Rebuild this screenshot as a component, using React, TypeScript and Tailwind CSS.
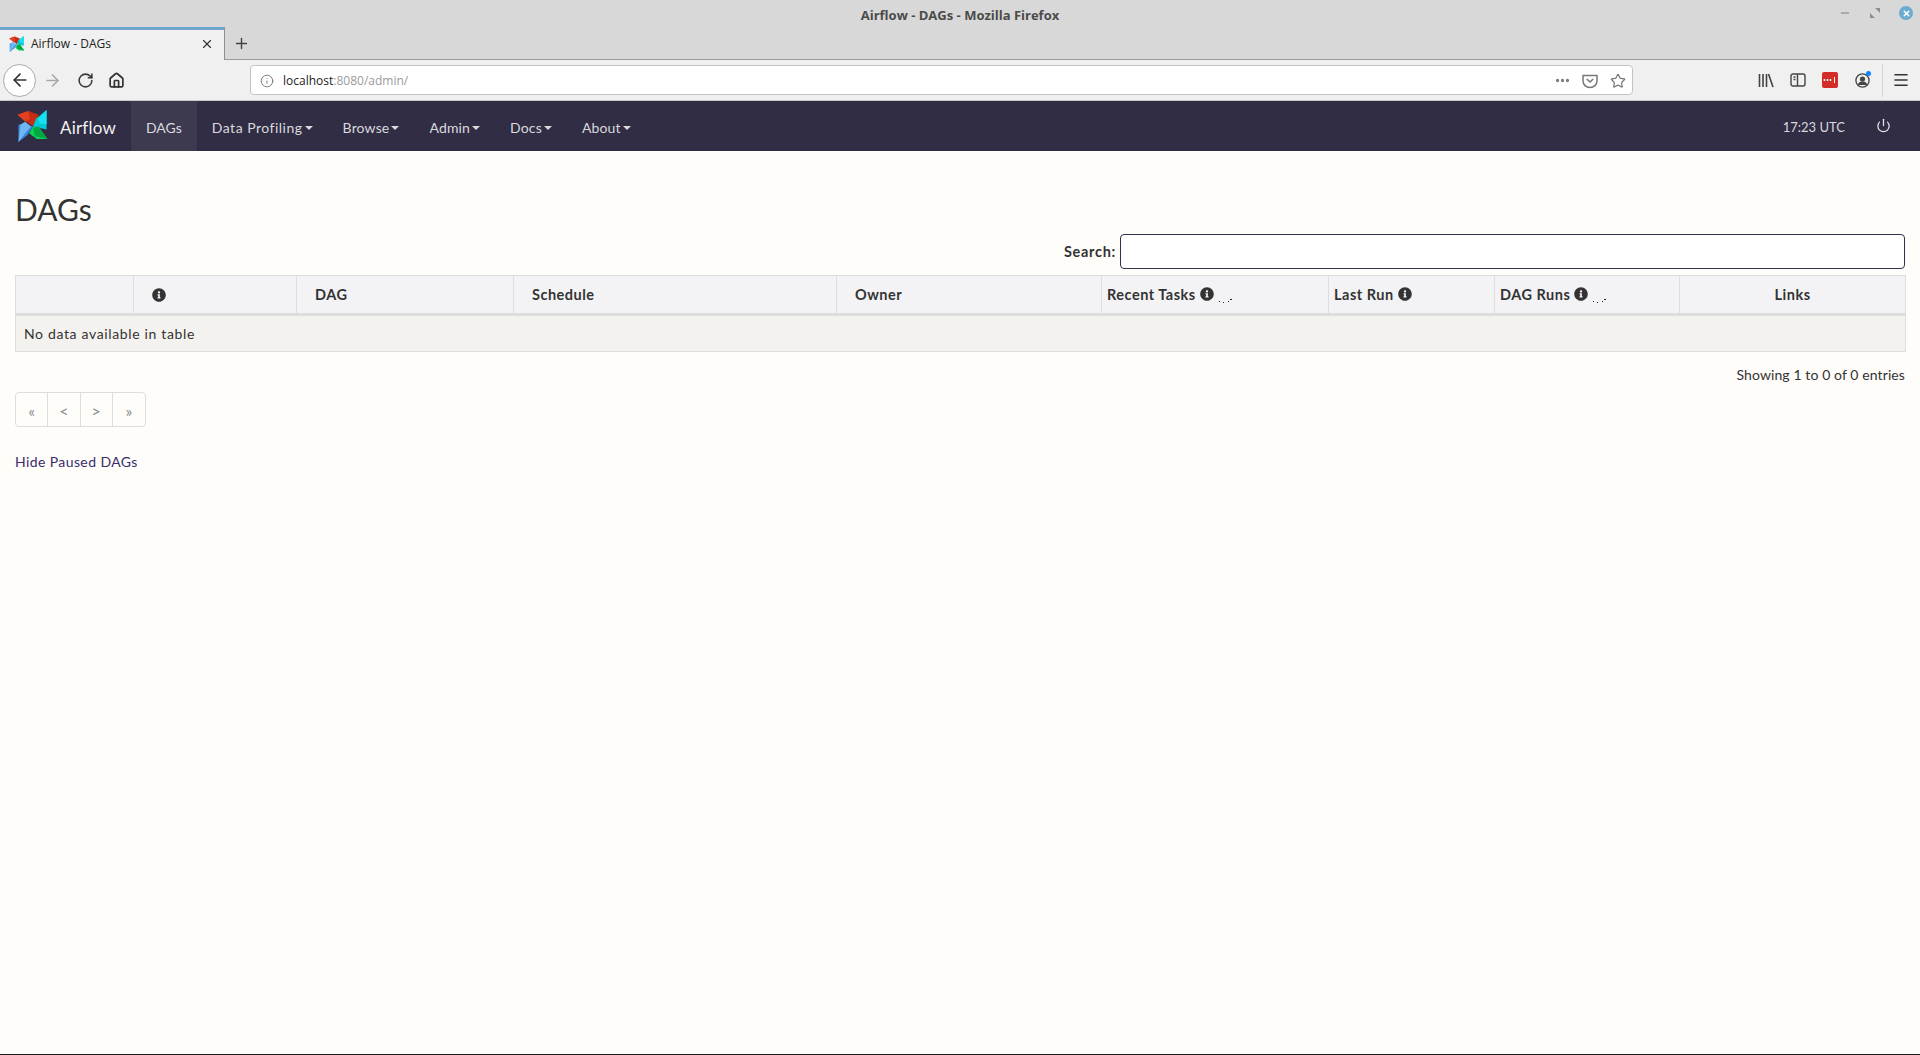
import React from "react";
import { ArrowLeft, ArrowRight, RotateCw, House, Info, Ellipsis, Star, Menu, Power, X, Plus, Minus } from "lucide-react";
import { FaInfoCircle } from "react-icons/fa";

function Logo({ size }: { size: number }) {
  return (
    <svg width={size} height={size} viewBox="0 0 32 33" className="shrink-0">
      <polygon points="0,5 11,1 22,5 16,17" fill="#c92a12" />
      <polygon points="0,5 11,1 13,9 8,12" fill="#e2401f" />
      <polygon points="30,0 30,20 16,17 19,9" fill="#00c7d4" />
      <polygon points="30,0 30,15 23,14 21,9" fill="#17e3f0" />
      <polygon points="31,30 20,30 12,24 16,17 22,19" fill="#04d659" />
      <polygon points="31,30 22,17 16,19 18,27" fill="#00a843" />
      <polygon points="1,33 1,15 16,17 10,26" fill="#3f84dc" />
      <polygon points="1,33 3,15 8,12 14,17 8,24" fill="#6db7f5" />
    </svg>
  );
}

function NavItem({ label, caret = true, active = false, tracking = "tracking-[0.15px]" }: { label: string; caret?: boolean; active?: boolean; tracking?: string }) {
  return (
    <a className={`flex h-full items-center px-[15px] pt-[2px] text-[14px] text-[#d9d9de] ${tracking} ${active ? "bg-[#3d394f]" : ""}`}>
      {label}
      {caret && <span className="ml-[2px] mt-[2px] h-0 w-0 border-x-[4px] border-t-[4px] border-x-transparent border-t-[#d9d9de]" />}
    </a>
  );
}

function Th({ children, w, center }: { children?: React.ReactNode; w: string; center?: boolean }) {
  return (
    <th className={`${w} border border-b-[3px] border-[#dddddd] bg-[#f3f3f5] p-0 font-bold ${center ? "text-center" : "text-left"}`}>
      {children}
    </th>
  );
}

function InfoI() {
  return <FaInfoCircle className="inline-block size-[14px] text-[#333333]" />;
}

function Dots() {
  return (
    <svg width="16" height="6" viewBox="0 0 16 6" className="ml-[4px] inline-block">
      <rect x="1" y="3" width="1" height="1" fill="#222" />
      <rect x="5" y="4" width="1" height="1" fill="#222" />
      <rect x="10" y="3" width="1" height="1" fill="#222" />
      <rect x="12" y="1" width="2" height="1" fill="#222" />
    </svg>
  );
}

function Page({ children, border = true }: { children: React.ReactNode; border?: boolean }) {
  return (
    <a className={`flex h-[33px] w-[32.5px] items-center justify-center pt-[3px] text-[16px] text-[#8a8a8f] ${border ? "border-r border-[#dddde0]" : ""}`}>
      {children}
    </a>
  );
}

export default function App() {
  return (
    <div className="flex h-[1055px] flex-col overflow-hidden border-b border-[#1c1c1c] bg-[#fefdfa] font-['Lato',sans-serif] text-[#333333]">
      {/* window title bar */}
      <div className="relative flex h-[27px] items-center justify-center bg-[#d8d8d8] font-['Open_Sans',sans-serif] text-[13px] font-bold text-[#4b4b4b]">
        <span className="mt-[4px]">Airflow - DAGs - Mozilla Firefox</span>
        <div className="absolute right-[7px] top-[6px] flex items-center gap-[18px]">
          <Minus className="size-[12px] text-[#9a9a9a]" strokeWidth={3} />
          <svg width="12" height="12" viewBox="0 0 12 12"><polygon points="6,1 11,1 11,6" fill="#8f8f8f" /><polygon points="1,6 6,11 1,11" fill="#8f8f8f" /></svg>
          <span className="flex size-[14px] items-center justify-center rounded-full bg-[#6cacd3]">
            <X className="size-[9px] text-white" strokeWidth={4} />
          </span>
        </div>
      </div>
      {/* tab strip */}
      <div className="flex h-[33px] items-stretch border-b border-[#9b9b9b] bg-[#d8d8d8]">
        <div className="-mb-px flex w-[225px] items-center border-r border-t-[3px] border-r-[#8f8f8f] border-t-[#6ea7cb] bg-[#f0f0f0] pb-[2px] pl-[9px] pr-[10px] font-['Open_Sans',sans-serif] text-[12px] text-[#222]">
          <Logo size={16} />
          <span className="ml-[6px] flex-1">Airflow - DAGs</span>
          <X className="size-[14px] text-[#333]" strokeWidth={2} />
        </div>
        <div className="flex w-[32px] items-center justify-center">
          <Plus className="size-[17px] text-[#444]" strokeWidth={2} />
        </div>
      </div>
      {/* toolbar */}
      <div className="flex h-[41px] items-center border-b border-[#c8c8c8] bg-[#f0f0f0] pl-[3px]">
        <span className="flex size-[33px] items-center justify-center rounded-full border border-[#a8a8a8] bg-white">
          <ArrowLeft className="size-[20px] text-[#333]" strokeWidth={2} />
        </span>
        <ArrowRight className="ml-[7px] size-[19px] text-[#a9a9a9]" strokeWidth={2} />
        <RotateCw className="ml-[15px] size-[17px] text-[#3a3a3a]" strokeWidth={2.2} />
        <House className="ml-[14px] size-[17px] text-[#333]" strokeWidth={2.4} />
        <div className="ml-[125px] flex h-[30px] w-[1383px] items-center rounded-[4px] border border-[#c4c4c4] bg-white pl-[9px] pr-[6px] pt-px font-['Open_Sans',sans-serif] text-[12px]">
          <Info className="size-[14px] text-[#777]" strokeWidth={1.6} />
          <span className="ml-[9px] text-[#222]">localhost</span>
          <span className="flex-1 text-[#9a9a9a]">:8080/admin/</span>
          <Ellipsis className="size-[17px] text-[#777]" strokeWidth={2.6} />
          <svg width="16" height="16" viewBox="0 0 16 16" fill="none" className="ml-[11px]">
            <path d="M1 2.5h14v5.5a7 6.5 0 0 1-14 0z" stroke="#777" strokeWidth="1.5" strokeLinejoin="round" />
            <path d="M4.8 6l3.2 3 3.2-3" stroke="#777" strokeWidth="1.6" />
          </svg>
          <Star className="ml-[12px] size-[16px] text-[#777]" strokeWidth={1.8} />
        </div>
        <div className="ml-[125px] flex items-center">
          <svg width="16" height="16" viewBox="0 0 16 16" fill="none" stroke="#444" strokeWidth="1.6">
            <path d="M1.5 2v13M5 2v13M8.5 2v13M10.5 2l4.5 13" />
          </svg>
          <svg width="16" height="14" viewBox="0 0 16 14" fill="none" stroke="#444" strokeWidth="1.4" className="ml-[16px]">
            <rect x="1" y="1" width="14" height="12" rx="2" />
            <path d="M7.5 1v12M3.5 4h2M3.5 6.5h2" />
          </svg>
          <span className="relative ml-[16px] flex h-[16px] w-[16px] items-center justify-center rounded-[2px] bg-[#d32d27]">
            <svg width="14" height="6" viewBox="0 0 14 6"><circle cx="1.5" cy="3" r="1" fill="#fff" /><circle cx="4.5" cy="3" r="1" fill="#fff" /><circle cx="7.5" cy="3" r="1" fill="#fff" /><rect x="11" y="0" width="1" height="6" fill="#fff" /></svg>
          </span>
          <span className="relative ml-[17px] block h-[15px] w-[15px]">
            <svg width="15" height="15" viewBox="0 0 15 15" fill="none">
              <circle cx="7.5" cy="7.5" r="6.6" stroke="#444" strokeWidth="1.3" />
              <circle cx="7.5" cy="6" r="2.6" fill="#444" />
              <path d="M3 12a4.5 3.5 0 0 1 9 0z" fill="#444" />
            </svg>
            <span className="absolute -right-[1px] -top-[2px] size-[5px] rounded-full bg-[#0a84ff]" />
          </span>
          <span className="ml-[12px] h-[33px] w-px bg-[#d4d4d4]" />
          <Menu className="ml-[9px] size-[18px] text-[#333]" strokeWidth={2.2} />
        </div>
      </div>
      {/* navbar */}
      <nav className="flex h-[50px] items-center bg-[#312d45]">
        <a className="flex h-full items-center pl-[17px] pr-[15px]">
          <Logo size={32} />
          <span className="ml-[11px] pt-[3px] text-[17px] tracking-[0.2px] text-[#f2f2f2]">Airflow</span>
        </a>
        <NavItem label="DAGs" caret={false} active tracking="tracking-[0px]" />
        <NavItem label="Data Profiling" tracking="tracking-[0.5px]" />
        <NavItem label="Browse" />
        <NavItem label="Admin" />
        <NavItem label="Docs" />
        <NavItem label="About" />
        <span className="ml-auto pt-[3px] text-[13px] text-[#d9d9de]">17:23 UTC</span>
        <Power className="ml-[31px] mr-[29px] size-[15px] -translate-y-[1px] text-[#e6e6e9]" strokeWidth={2} />
      </nav>
      {/* content */}
      <main className="flex flex-col px-[15px]">
        <h1 className="mt-[42px] text-[30px] font-normal leading-[33px]">DAGs</h1>
        <div className="mt-[8px] flex items-center justify-end text-[14.5px] font-bold">
          <label className="mr-[4px] tracking-[0.7px]">Search:</label>
          <input className="h-[35px] w-[785px] rounded-[4px] border border-[#33304a] bg-white" />
        </div>
        <table className="mt-[6px] w-full table-fixed border-collapse text-[14.5px] tracking-[0.5px]">
          <thead>
            <tr className="h-[39px]">
              <Th w="w-[118px]" />
              <Th w="w-[163px]"><span className="ml-[18px] block -translate-y-[1px]"><InfoI /></span></Th>
              <Th w="w-[217px]"><span className="ml-[18px]">DAG</span></Th>
              <Th w="w-[323px]"><span className="ml-[18px]">Schedule</span></Th>
              <Th w="w-[265px]"><span className="ml-[18px]">Owner</span></Th>
              <Th w="w-[227px]"><span className="ml-[5px] flex items-center">Recent Tasks<span className="ml-[4px] flex -translate-y-[1px]"><InfoI /></span><span className="translate-y-[5px]"><Dots /></span></span></Th>
              <Th w="w-[166px]"><span className="ml-[5px] flex items-center">Last Run<span className="ml-[4px] flex -translate-y-[1px]"><InfoI /></span></span></Th>
              <Th w="w-[185px]"><span className="ml-[5px] flex items-center">DAG Runs<span className="ml-[4px] flex -translate-y-[1px]"><InfoI /></span><span className="translate-y-[5px]"><Dots /></span></span></Th>
              <Th w="w-[226px]" center>Links</Th>
            </tr>
          </thead>
          <tbody>
            <tr className="h-[37px]">
              <td colSpan={9} className="border border-[#dddddd] bg-[#f3f2ee] pl-[8px] text-[14px] tracking-[0.65px]">No data available in table</td>
            </tr>
          </tbody>
        </table>
        <div className="mt-[13px] text-right text-[14px] leading-[20px] tracking-[0.1px]">Showing 1 to 0 of 0 entries</div>
        <div className="mt-[7px] flex w-[131px] overflow-hidden rounded-[4px] border border-[#dddde0]">
          <Page>«</Page>
          <Page>&lt;</Page>
          <Page>&gt;</Page>
          <Page border={false}>»</Page>
        </div>
        <a className="mt-[25px] text-[14px] leading-[20px] tracking-[0.4px] text-[#3b2c6b]">Hide Paused DAGs</a>
      </main>
    </div>
  );
}
